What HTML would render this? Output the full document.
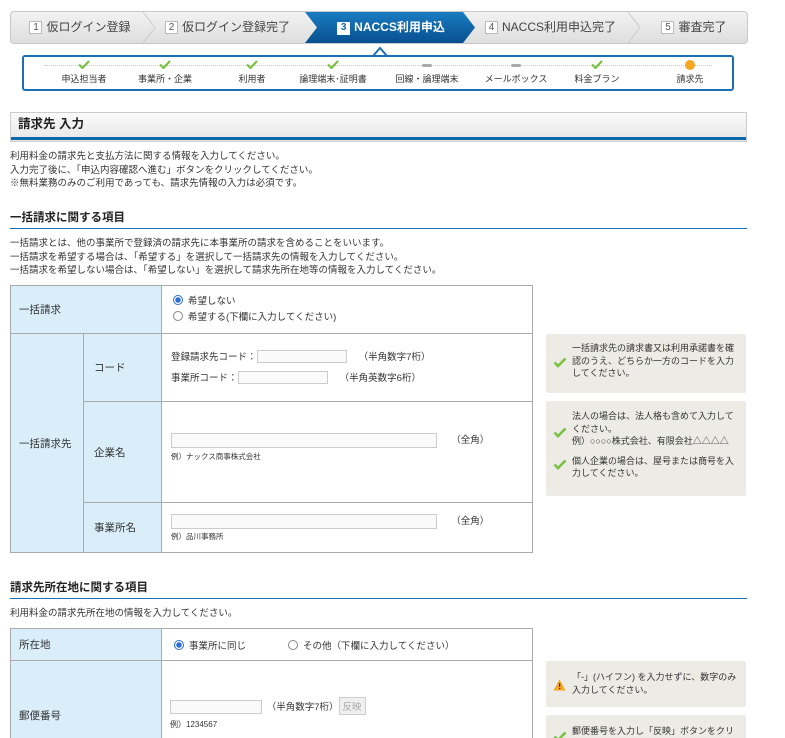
<!DOCTYPE html>
<html><head><meta charset="utf-8"><style>
*{margin:0;padding:0;box-sizing:border-box}
html,body{width:785px;height:738px;overflow:hidden}
body{background:#fff;font-family:"Liberation Sans","Noto Sans CJK JP",sans-serif;color:#333;font-size:10px;position:relative}
.a{position:absolute;white-space:nowrap}
.steps{position:absolute;left:10px;top:11px;width:738px;height:33px;border:1px solid #c8c8c8;border-radius:4px;background:linear-gradient(#f2f2f2,#dedede);overflow:hidden}
.st{position:absolute;top:0;height:31px;line-height:31px;font-size:12px;color:#444;text-align:center}
.num{display:inline-block;width:13px;height:13px;line-height:12px;border:1px solid #bbb;background:#fff;font-size:10px;margin-right:4px;color:#555;vertical-align:1px}
.sub{position:absolute;left:22px;top:55px;width:712px;height:36px;border:2px solid #1a6fb4;border-radius:3px;background:#fff}
.si{position:absolute;top:0;width:100px;margin-left:-50px;text-align:center;font-size:9px;color:#333}
.chk{display:block;margin:3px auto 0;width:12px;height:9px}
.dash{display:block;margin:7px auto 0;width:10px;height:3px;background:#aaa;border-radius:2px}
.p{font-size:9.5px;line-height:13.5px;color:#333}
.h{font-size:11.5px;font-weight:bold;color:#222}
table{position:absolute;border-collapse:collapse;font-size:10.5px;table-layout:fixed}
td{border:1px solid #aaa;vertical-align:middle}
td.l{background:#d9eef9;padding-left:8px;color:#333}
.in{display:inline-block;border:1px solid #ccc;background:#fafafa;height:13px;vertical-align:middle}
.hint{position:absolute;left:546px;width:200px;background:#ecebe5;border-radius:2px;font-size:9px;line-height:12.5px;color:#333}
.rd{display:inline-block;width:10px;height:10px;border:1px solid #888;border-radius:50%;vertical-align:-1px;margin-right:5px;background:#fff}
.rd.on{border-color:#2b6fd6;background:radial-gradient(#2b6fd6 0 2.5px,#fff 3px)}
</style></head><body>
<div class="steps">
<div class="st" style="left:0;width:138px"><span class="num">1</span>仮ログイン登録</div>
<svg class="a" style="left:132px;top:0" width="14" height="31"><path d="M0 0L12 15.5L0 31" fill="none" stroke="#ccc"/></svg>
<div class="st" style="left:138px;width:157px"><span class="num">2</span>仮ログイン登録完了</div>
<svg class="a" style="left:294px;top:0" width="172" height="31"><defs><linearGradient id="g" x1="0" y1="0" x2="0" y2="1"><stop offset="0" stop-color="#1a7cc2"/><stop offset="1" stop-color="#07508f"/></linearGradient></defs><path d="M0 0H158L170 15.5L158 31H0L12 15.5Z" fill="url(#g)"/></svg>
<div class="st" style="left:300px;width:160px;color:#fff;font-weight:bold"><span class="num" style="border:none;color:#0c68aa;font-weight:bold">3</span>NACCS利用申込</div>
<div class="st" style="left:462px;width:155px"><span class="num">4</span>NACCS利用申込完了</div>
<svg class="a" style="left:617px;top:0" width="14" height="31"><path d="M0 0L12 15.5L0 31" fill="none" stroke="#ccc"/></svg>
<div class="st" style="left:630px;width:106px"><span class="num">5</span>審査完了</div>
</div>
<svg class="a" style="left:373px;top:46px" width="14" height="11"><path d="M0 10L7 2L14 10" fill="#fff" stroke="#1a6fb4" stroke-width="2"/></svg>
<div class="sub">
<div class="a" style="left:20px;right:20px;top:8px;border-top:1px dotted #ccc"></div>
<div class="si" style="left:60px"><svg class="chk" viewBox="0 0 12 9"><path d="M1 4.5L4.5 8L11 1" fill="none" stroke="#7ac142" stroke-width="2.2"/></svg><div style="margin-top:3px">申込担当者</div></div>
<div class="si" style="left:141px"><svg class="chk" viewBox="0 0 12 9"><path d="M1 4.5L4.5 8L11 1" fill="none" stroke="#7ac142" stroke-width="2.2"/></svg><div style="margin-top:3px">事業所・企業</div></div>
<div class="si" style="left:228px"><svg class="chk" viewBox="0 0 12 9"><path d="M1 4.5L4.5 8L11 1" fill="none" stroke="#7ac142" stroke-width="2.2"/></svg><div style="margin-top:3px">利用者</div></div>
<div class="si" style="left:309px"><svg class="chk" viewBox="0 0 12 9"><path d="M1 4.5L4.5 8L11 1" fill="none" stroke="#7ac142" stroke-width="2.2"/></svg><div style="margin-top:3px">論理端末･証明書</div></div>
<div class="si" style="left:403px"><span class="dash"></span><div style="margin-top:5px">回線・論理端末</div></div>
<div class="si" style="left:492px"><span class="dash"></span><div style="margin-top:5px">メールボックス</div></div>
<div class="si" style="left:573px"><svg class="chk" viewBox="0 0 12 9"><path d="M1 4.5L4.5 8L11 1" fill="none" stroke="#7ac142" stroke-width="2.2"/></svg><div style="margin-top:3px">料金プラン</div></div>
<div class="si" style="left:666px"><span style="display:block;margin:3px auto 0;width:10px;height:10px;border-radius:50%;background:#f5a623"></span><div style="margin-top:2px">請求先</div></div>
</div>

<div class="a" style="left:10px;top:112px;width:737px;height:30px;border:1px solid #ccc;background:linear-gradient(#fafafa,#e6e6e6)"><div style="position:absolute;left:0;right:0;bottom:1px;height:3px;background:#0c68aa"></div><div style="position:absolute;left:7px;top:3px;font-size:12.5px;line-height:17px;font-weight:bold;color:#222">請求先 入力</div></div>

<div class="a p" style="left:10px;top:150px">利用料金の請求先と支払方法に関する情報を入力してください。<br>入力完了後に、「申込内容確認へ進む」ボタンをクリックしてください。<br>※無料業務のみのご利用であっても、請求先情報の入力は必須です。</div>

<div class="a h" style="left:10px;top:209px">一括請求に関する項目</div>
<div class="a" style="left:10px;top:228px;width:737px;height:1px;background:#1a6fb4"></div>
<div class="a p" style="left:10px;top:237px">一括請求とは、他の事業所で登録済の請求先に本事業所の請求を含めることをいいます。<br>一括請求を希望する場合は、「希望する」を選択して一括請求先の情報を入力してください。<br>一括請求を希望しない場合は、「希望しない」を選択して請求先所在地等の情報を入力してください。</div>

<table style="left:10px;top:285px;width:522px">
<colgroup><col style="width:73px"><col style="width:78px"><col style="width:371px"></colgroup>
<tr style="height:48px"><td class="l" colspan="2">一括請求</td><td style="padding-left:11px;font-size:9.5px;line-height:16px"><span class="rd on"></span>希望しない<br><span class="rd"></span>希望する(下欄に入力してください)</td></tr>
<tr style="height:68px"><td class="l" rowspan="3">一括請求先</td><td class="l" style="padding-left:10px">コード</td><td style="padding-left:9px;font-size:9.5px;line-height:21px">登録請求先コード：<span class="in" style="width:90px"></span>　 （半角数字7桁）<br>事業所コード：<span class="in" style="width:90px"></span>　 （半角英数字6桁）</td></tr>
<tr style="height:101px"><td class="l" style="padding-left:10px">企業名</td><td style="padding-left:9px;font-size:9.5px"><div style="margin-top:-10px"><span class="in" style="width:266px;height:15px"></span>　　（全角）</div><div style="font-size:7.5px;margin-top:3px">例）ナックス商事株式会社</div></td></tr>
<tr style="height:50px"><td class="l" style="padding-left:10px">事業所名</td><td style="padding-left:9px;font-size:9.5px"><div><span class="in" style="width:266px;height:15px"></span>　　（全角）</div><div style="font-size:7.5px;margin-top:2px">例）品川事務所</div></td></tr>
</table>

<div class="hint" style="top:334px;height:59px;padding:8px 6px 0 26px"><svg class="a" style="left:7px;top:23px" width="14" height="11"><path d="M1.5 5.5L5 9L12.5 1.5" fill="none" stroke="#7ac142" stroke-width="2.6"/></svg>一括請求先の請求書又は利用承諾書を確認のうえ、どちらか一方のコードを入力してください。</div>
<div class="hint" style="top:401px;height:95px;padding:9px 6px 0 26px"><svg class="a" style="left:7px;top:26px" width="14" height="11"><path d="M1.5 5.5L5 9L12.5 1.5" fill="none" stroke="#7ac142" stroke-width="2.6"/></svg><svg class="a" style="left:7px;top:58px" width="14" height="11"><path d="M1.5 5.5L5 9L12.5 1.5" fill="none" stroke="#7ac142" stroke-width="2.6"/></svg>法人の場合は、法人格も含めて入力してください。<br>例）○○○○株式会社、有限会社△△△△<div style="margin-top:7px">個人企業の場合は、屋号または商号を入力してください。</div></div>

<div class="a h" style="left:10px;top:579px">請求先所在地に関する項目</div>
<div class="a" style="left:10px;top:598px;width:737px;height:1px;background:#1a6fb4"></div>
<div class="a p" style="left:10px;top:607px">利用料金の請求先所在地の情報を入力してください。</div>

<table style="left:10px;top:628px;width:522px">
<colgroup><col style="width:151px"><col style="width:371px"></colgroup>
<tr style="height:32px"><td class="l">所在地</td><td style="padding-left:12px;font-size:9.5px"><span class="rd on"></span>事業所に同じ<span style="display:inline-block;width:42px"></span><span class="rd"></span>その他（下欄に入力してください）</td></tr>
<tr style="height:110px"><td class="l" style="vertical-align:top;padding-top:47px">郵便番号</td><td style="padding-left:8px;font-size:9.5px;vertical-align:top;padding-top:36px"><span class="in" style="width:92px;height:14px"></span>　（半角数字7桁）<span style="display:inline-block;border:1px solid #ccc;background:#f0f0f0;color:#aaa;padding:1px 3px">反映</span><div style="font-size:8px;margin-top:4px">例）1234567</div></td></tr>
</table>

<div class="hint" style="top:661px;height:46px;padding:10px 6px 0 26px"><svg class="a" style="left:7px;top:18px" width="13" height="12"><path d="M6.5 0.5L12.5 11.5H0.5Z" fill="#f5a623"/><rect x="6" y="4" width="1.2" height="4" fill="#333"/><rect x="6" y="9" width="1.2" height="1.2" fill="#333"/></svg>「-」(ハイフン) を入力せずに、数字のみ入力してください。</div>
<div class="hint" style="top:715px;height:40px;padding:10px 6px 0 26px"><svg class="a" style="left:7px;top:16px" width="14" height="11"><path d="M1.5 5.5L5 9L12.5 1.5" fill="none" stroke="#7ac142" stroke-width="2.6"/></svg>郵便番号を入力し「反映」ボタンをクリッ</div>
</body></html>
